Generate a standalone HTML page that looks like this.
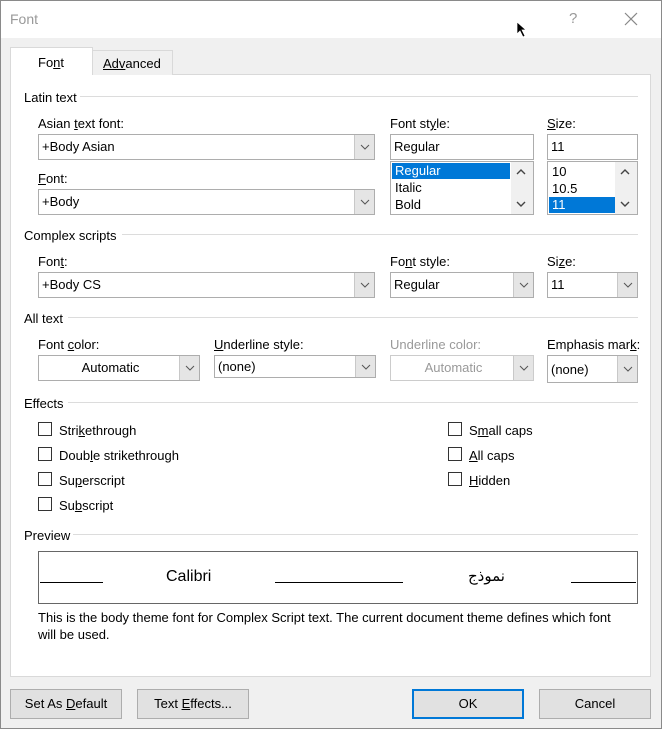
<!DOCTYPE html>
<html><head><meta charset="utf-8"><style>
*{box-sizing:border-box;margin:0;padding:0}
body{width:662px;height:729px;position:relative;background:#f0f0f0;font-family:"Liberation Sans",sans-serif;font-size:13px;color:#000;overflow:hidden}
.a{position:absolute;white-space:nowrap}
.win{position:absolute;left:0;top:0;width:662px;height:729px;border:1px solid #8a8a8a}
.title{position:absolute;left:1px;top:1px;width:660px;height:37px;background:#fff}
.panel{position:absolute;left:10px;top:74px;width:641px;height:603px;background:#fff;border:1px solid #d9d9d9}
.grp{position:absolute;height:1px;background:#dcdcdc}
.box{position:absolute;background:#fff;border:1px solid #adadad;padding-left:3px;line-height:24px}
.dd{position:absolute;top:0;right:0;width:20px;height:100%;background:#e5e5e5;border-left:1px solid #c8c8c8}
.dd svg,.sb svg{position:absolute;left:5px;top:50%;margin-top:-3px}
.cb{position:absolute;width:14px;height:14px;border:1px solid #333;background:#fff}
.btn{position:absolute;top:689px;height:30px;width:112px;background:#e1e1e1;border:1px solid #adadad;text-align:center;line-height:28px}
.sel{background:#0078d7;color:#fff}
.sb{position:absolute;right:0;top:0;width:22px;height:100%;background:#f0f0f0}
u{text-decoration:underline}
</style></head><body>
<div class="win"></div>
<div class="title"></div>
<div class="a" style="left:10px;top:11px;font-size:14px;color:#999">Font</div>
<div class="a" style="left:569px;top:10px;font-size:15px;color:#999">?</div>
<svg class="a" style="left:624px;top:12px" width="14" height="14"><path d="M1 1L13 13M13 1L1 13" stroke="#888" stroke-width="1.2"/></svg>
<svg class="a" style="left:516px;top:21px" width="12" height="18"><path d="M1 1L1 13L4 10L7 16L9 15L6 9L10 9Z" fill="#000" stroke="#fff" stroke-width=".7"/></svg>

<div class="panel"></div>
<div class="a" style="left:92px;top:50px;width:81px;height:25px;background:#f0f0f0;border:1px solid #d9d9d9;border-bottom:none"></div>
<div class="a" style="left:103px;top:56px"><u>Adv</u>anced</div>
<div class="a" style="left:10px;top:47px;width:83px;height:28px;background:#fff;border:1px solid #d9d9d9;border-bottom:none"></div>
<div class="a" style="left:38px;top:55px">Fo<u>n</u>t</div>

<div class="a" style="left:24px;top:90px">Latin text</div><div class="grp" style="left:80px;top:96px;width:558px"></div>
<div class="a" style="left:38px;top:116px">Asian <u>t</u>ext font:</div>
<div class="box" style="left:38px;top:134px;width:337px;height:26px">+Body Asian<div class="dd"><svg width="10" height="6"><path d="M1 1L5 5L9 1" stroke="#555" fill="none"/></svg></div></div>
<div class="a" style="left:38px;top:171px"><u>F</u>ont:</div>
<div class="box" style="left:38px;top:189px;width:337px;height:26px">+Body<div class="dd"><svg width="10" height="6"><path d="M1 1L5 5L9 1" stroke="#555" fill="none"/></svg></div></div>

<div class="a" style="left:390px;top:116px">Font st<u>y</u>le:</div>
<div class="box" style="left:390px;top:134px;width:144px;height:26px">Regular</div>
<div class="box" style="left:390px;top:161px;width:144px;height:54px;padding:1px;line-height:17px">
<div class="sel" style="width:118px;padding-left:3px;height:16px;line-height:16px">Regular</div><div style="padding-left:3px">Italic</div><div style="padding-left:3px">Bold</div>
<div class="sb"><svg style="top:10px" width="10" height="6"><path d="M1 5L5 1L9 5" stroke="#444" fill="none" stroke-width="1.4"/></svg><svg style="top:42px" width="10" height="6"><path d="M1 1L5 5L9 1" stroke="#444" fill="none" stroke-width="1.4"/></svg></div></div>

<div class="a" style="left:547px;top:116px"><u>S</u>ize:</div>
<div class="box" style="left:547px;top:134px;width:91px;height:26px">11</div>
<div class="box" style="left:547px;top:161px;width:91px;height:54px;padding:1px;line-height:17px">
<div style="padding-left:3px">10</div><div style="padding-left:3px">10.5</div><div class="sel" style="width:66px;padding-left:3px;height:16px;line-height:16px">11</div>
<div class="sb"><svg style="top:10px" width="10" height="6"><path d="M1 5L5 1L9 5" stroke="#444" fill="none" stroke-width="1.4"/></svg><svg style="top:42px" width="10" height="6"><path d="M1 1L5 5L9 1" stroke="#444" fill="none" stroke-width="1.4"/></svg></div></div>

<div class="a" style="left:24px;top:228px">Complex scripts</div><div class="grp" style="left:122px;top:234px;width:516px"></div>
<div class="a" style="left:38px;top:254px">Fon<u>t</u>:</div>
<div class="box" style="left:38px;top:272px;width:337px;height:26px">+Body CS<div class="dd"><svg width="10" height="6"><path d="M1 1L5 5L9 1" stroke="#555" fill="none"/></svg></div></div>
<div class="a" style="left:390px;top:254px">Fo<u>n</u>t style:</div>
<div class="box" style="left:390px;top:272px;width:144px;height:26px">Regular<div class="dd"><svg width="10" height="6"><path d="M1 1L5 5L9 1" stroke="#555" fill="none"/></svg></div></div>
<div class="a" style="left:547px;top:254px">Si<u>z</u>e:</div>
<div class="box" style="left:547px;top:272px;width:91px;height:26px">11<div class="dd"><svg width="10" height="6"><path d="M1 1L5 5L9 1" stroke="#555" fill="none"/></svg></div></div>

<div class="a" style="left:24px;top:311px">All text</div><div class="grp" style="left:68px;top:317px;width:570px"></div>
<div class="a" style="left:38px;top:337px">Font <u>c</u>olor:</div>
<div class="box" style="left:38px;top:355px;width:162px;height:26px;text-align:center;padding-right:20px">Automatic<div class="dd"><svg width="10" height="6"><path d="M1 1L5 5L9 1" stroke="#555" fill="none"/></svg></div></div>
<div class="a" style="left:214px;top:337px"><u>U</u>nderline style:</div>
<div class="box" style="left:214px;top:355px;width:162px;height:23px;line-height:21px">(none)<div class="dd"><svg width="10" height="6"><path d="M1 1L5 5L9 1" stroke="#555" fill="none"/></svg></div></div>
<div class="a" style="left:390px;top:337px;color:#999">Underline color:</div>
<div class="box" style="left:390px;top:355px;width:144px;height:26px;text-align:center;padding-right:20px;color:#999;border-color:#ccc">Automatic<div class="dd"><svg width="10" height="6"><path d="M1 1L5 5L9 1" stroke="#555" fill="none"/></svg></div></div>
<div class="a" style="left:547px;top:337px">Emphasis mar<u>k</u>:</div>
<div class="box" style="left:547px;top:355px;width:91px;height:28px;line-height:28px">(none)<div class="dd"><svg width="10" height="6"><path d="M1 1L5 5L9 1" stroke="#555" fill="none"/></svg></div></div>

<div class="a" style="left:24px;top:396px">Effects</div><div class="grp" style="left:68px;top:402px;width:570px"></div>
<div class="cb" style="left:38px;top:422px"></div><div class="a" style="left:59px;top:423px">Stri<u>k</u>ethrough</div>
<div class="cb" style="left:38px;top:447px"></div><div class="a" style="left:59px;top:448px">Doub<u>l</u>e strikethrough</div>
<div class="cb" style="left:38px;top:472px"></div><div class="a" style="left:59px;top:473px">Su<u>p</u>erscript</div>
<div class="cb" style="left:38px;top:497px"></div><div class="a" style="left:59px;top:498px">Su<u>b</u>script</div>
<div class="cb" style="left:448px;top:422px"></div><div class="a" style="left:469px;top:423px">S<u>m</u>all caps</div>
<div class="cb" style="left:448px;top:447px"></div><div class="a" style="left:469px;top:448px"><u>A</u>ll caps</div>
<div class="cb" style="left:448px;top:472px"></div><div class="a" style="left:469px;top:473px"><u>H</u>idden</div>

<div class="a" style="left:24px;top:528px">Preview</div><div class="grp" style="left:73px;top:534px;width:565px"></div>
<div class="a" style="left:38px;top:551px;width:600px;height:53px;border:1px solid #666;background:#fff"></div>
<div class="a" style="left:40px;top:582px;width:63px;height:1px;background:#000"></div>
<div class="a" style="left:275px;top:582px;width:128px;height:1px;background:#000"></div>
<div class="a" style="left:571px;top:582px;width:65px;height:1px;background:#000"></div>
<div class="a" style="left:166px;top:568px;font-size:16px">Calibri</div>
<div class="a" style="left:468px;top:567px;font-size:15px;font-family:'DejaVu Sans',sans-serif">نموذج</div>
<div class="a" style="left:38px;top:610px">This is the body theme font for Complex Script text. The current document theme defines which font</div>
<div class="a" style="left:38px;top:627px">will be used.</div>

<div class="btn" style="left:10px">Set As <u>D</u>efault</div>
<div class="btn" style="left:137px">Text <u>E</u>ffects...</div>
<div class="btn" style="left:412px;border:2px solid #0078d7;line-height:26px">OK</div>
<div class="btn" style="left:539px">Cancel</div>
</body></html>
